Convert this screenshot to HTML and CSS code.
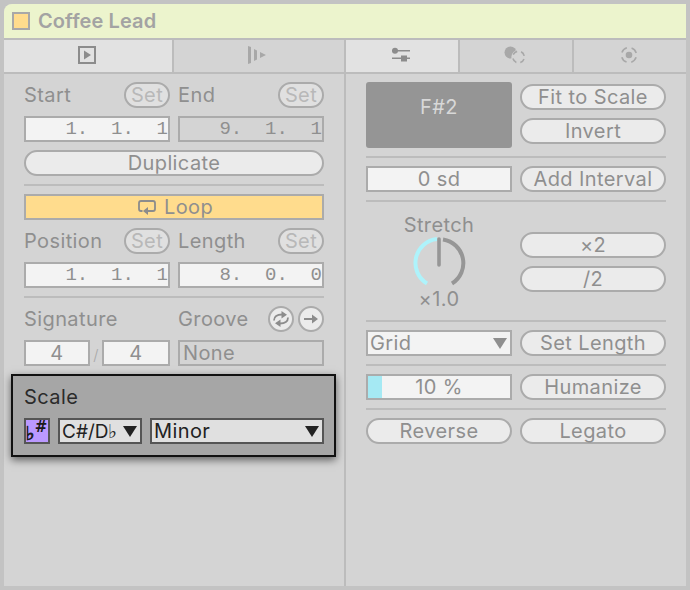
FILE: index.html
```html
<!DOCTYPE html>
<html lang="en">
<head>
<meta charset="utf-8">
<title>Coffee Lead</title>
<link rel="stylesheet" href="styles.css">
</head>
<body>
<div class="panel">
  <header class="title"><span class="swatch"></span><span class="title-text">Coffee Lead</span></header>
  <div class="columns">
    <section class="column">
      <nav class="tabs tabs-left">
        <div class="tab active"><svg class="nudge-2" width="18" height="18" viewBox="0 0 18 18"><rect x="1" y="1" width="16" height="16" fill="none" stroke="#8c8c8c" stroke-width="2"/><path d="M6 4.500 13 9 6 13.500Z" fill="#8c8c8c"/></svg></div>
        <div class="tab"><svg class="nudge-4" width="18" height="18" viewBox="0 0 18 18"><path d="M0 0 3 1V17L0 18Z" fill="#a8a8a8"/><path d="M6 3 9 4.500V13.500L6 15Z" fill="#a8a8a8"/><path d="M12 6 18 9 12 12Z" fill="#a8a8a8"/></svg></div>
      </nav>
      <div class="body">
        <div class="pair">
          <div class="label-row"><span class="label">Start</span><span class="btn set">Set</span></div>
          <div class="label-row"><span class="label">End</span><span class="btn set">Set</span></div>
        </div>
        <div class="pair">
          <div class="field num">1. 1. 1</div>
          <div class="field num off">9. 1. 1</div>
        </div>
        <div class="btn">Duplicate</div>
        <hr class="rule">
        <div class="loop"><svg width="18" height="16" viewBox="0 0 18 16"><path d="M4.500 12H3Q1 12 1 10V4Q1 2 3 2H15Q17 2 17 4V10Q17 12 15 12H9" fill="none" stroke="#8c8c8c" stroke-width="1.800"/><path d="M10 8V16L5 12Z" fill="#8c8c8c"/></svg><span>Loop</span></div>
        <div class="pair">
          <div class="label-row"><span class="label">Position</span><span class="btn set">Set</span></div>
          <div class="label-row"><span class="label">Length</span><span class="btn set">Set</span></div>
        </div>
        <div class="pair">
          <div class="field num">1. 1. 1</div>
          <div class="field num">8. 0. 0</div>
        </div>
        <hr class="rule">
        <div class="pair">
          <div class="label-row"><span class="label">Signature</span></div>
          <div class="label-row"><span class="label">Groove</span>
            <span class="circles">
              <span class="circle"><svg width="22" height="22" viewBox="0 0 22 22"><path d="M4 12.500C4 8.500 7 6.500 12 6.500" fill="none" stroke="#8c8c8c" stroke-width="1.800"/><path d="M11.500 3 17 6.800 11.500 10.500Z" fill="#8c8c8c"/><g transform="rotate(180 11 11)"><path d="M4 12.500C4 8.500 7 6.500 12 6.500" fill="none" stroke="#8c8c8c" stroke-width="1.800"/><path d="M11.500 3 17 6.800 11.500 10.500Z" fill="#8c8c8c"/></g></svg></span>
              <span class="circle"><svg width="22" height="22" viewBox="0 0 22 22"><path d="M4 10H12V6.500L18 11 12 15.500V12H4Z" fill="#8c8c8c"/></svg></span>
            </span>
          </div>
        </div>
        <div class="pair">
          <div class="signature"><div class="field">4</div><span class="slash">/</span><div class="field">4</div></div>
          <div class="field off left">None</div>
        </div>
        <div class="scale">
          <div class="scale-label">Scale</div>
          <div class="scale-row">
            <span class="flat"><span class="flat-b">♭</span><span class="flat-s">#</span></span>
            <div class="dark-select root"><span>C#/D♭</span><i class="arrow"></i></div>
            <div class="dark-select mode"><span>Minor</span><i class="arrow"></i></div>
          </div>
        </div>
      </div>
    </section>
    <section class="column">
      <nav class="tabs tabs-right">
        <div class="tab active"><svg class="nudge-2" width="18" height="16" viewBox="0 0 18 16"><path d="M0 3H18V4.600H0ZM0 10.500H18V12.100H0Z" fill="#8c8c8c"/><circle cx="3" cy="3.800" r="3" fill="#8c8c8c"/><rect x="9" y="8.500" width="6" height="6" fill="#8c8c8c"/></svg></div>
        <div class="tab"><svg class="nudge-3" width="22" height="18" viewBox="0 0 22 18"><circle cx="6.500" cy="6.500" r="6" fill="#a8a8a8"/><circle cx="14.500" cy="11" r="7.200" fill="#d4d4d4"/><circle cx="14.500" cy="11" r="5.800" fill="none" stroke="#a8a8a8" stroke-width="1.600" stroke-dasharray="5 4.100" stroke-dashoffset="-2"/></svg></div>
        <div class="tab"><svg class="nudge-2" width="18" height="18" viewBox="0 0 18 18"><circle cx="9" cy="9" r="3.300" fill="#a8a8a8"/><circle cx="9" cy="9" r="7.500" fill="none" stroke="#a8a8a8" stroke-width="1.600" stroke-dasharray="7 4.780" stroke-dashoffset="-2.400"/></svg></div>
      </nav>
      <div class="body">
        <div class="pair">
          <div class="note">F#2</div>
          <div class="side-buttons"><div class="btn">Fit to Scale</div><div class="btn">Invert</div></div>
        </div>
        <hr class="rule">
        <div class="pair">
          <div class="field">0 sd</div>
          <div class="btn">Add Interval</div>
        </div>
        <hr class="rule">
        <div class="pair stretch">
          <div class="knob">
            <div class="knob-label">Stretch</div>
            <svg class="knob-dial" width="56" height="52" viewBox="0 0 56 52"><path d="M16 47.500A24 24 0 0 1 26 3.100" fill="none" stroke="#aef3fb" stroke-width="4"/><path d="M32 3.400A24 24 0 0 1 41 47.500" fill="none" stroke="#969696" stroke-width="4"/><path d="M28 3V29" stroke="#969696" stroke-width="3.600" stroke-linecap="round"/></svg>
            <div class="knob-value">×1.0</div>
          </div>
          <div class="side-buttons stretch-buttons"><div class="btn">×2</div><div class="btn">/2</div></div>
        </div>
        <hr class="rule">
        <div class="pair">
          <div class="field select"><span>Grid</span><i class="arrow light"></i></div>
          <div class="btn">Set Length</div>
        </div>
        <hr class="rule">
        <div class="pair">
          <div class="field meter"><span class="meter-fill"></span><span>10 %</span></div>
          <div class="btn">Humanize</div>
        </div>
        <hr class="rule">
        <div class="pair">
          <div class="btn">Reverse</div>
          <div class="btn">Legato</div>
        </div>
      </div>
    </section>
  </div>
</div>
</body>
</html>
```

FILE: styles.css
```css
* { box-sizing: border-box; }
html, body { margin: 0; height: 100%; }
body {
  background: #c3c3c3;
  padding: 4px;
  width: 690px;
  height: 590px;
  overflow: hidden;
  font-family: Inter, "Liberation Sans", sans-serif;
  font-size: 20px;
  letter-spacing: 0.4px;
  color: #8f8f8f;
}
.panel {
  height: 582px;
  display: flex;
  flex-direction: column;
  background: #d4d4d4;
  border-radius: 8px 0 0 0;
}
.title {
  height: 34px;
  flex: none;
  display: flex;
  align-items: center;
  gap: 8px;
  padding-left: 8px;
  background: #ecf4cd;
  border-radius: 8px 0 0 0;
}
.swatch {
  width: 18px;
  height: 18px;
  background: #ffdc8d;
  border: 2px solid #a8a8a8;
}
.title-text { font-weight: 600; color: #a3a3a3; letter-spacing: 0.1px; }
.columns { flex: 1; display: grid; grid-template-columns: 340px 342px; }
.column { display: flex; flex-direction: column; }
.column + .column { border-left: 2px solid #bcbcbc; }
.tabs {
  flex: none;
  display: grid;
  height: 36px;
  border-top: 2px solid #bcbcbc;
  border-bottom: 2px solid #bcbcbc;
}
.tabs-left { grid-template-columns: 168px 172px; }
.tabs-right { grid-template-columns: 112px 114px 114px; }
.tab { display: flex; align-items: center; justify-content: center; }
.tab + .tab { border-left: 2px solid #bcbcbc; }
.tab.active { background: #e2e2e2; }
.tab svg { margin-bottom: 2px; }
.tab .nudge-2 { margin-right: 2px; }
.tab .nudge-3 { margin-right: 3px; }
.tab .nudge-4 { margin-right: 4px; }
.body { display: flex; flex-direction: column; gap: 8px; padding: 8px 20px 0; }
.pair { display: grid; grid-template-columns: 146px 146px; gap: 8px; }
.label-row { display: flex; justify-content: space-between; align-items: center; height: 26px; }
.label { line-height: 26px; margin-top: -1px; }
.btn {
  height: 26px;
  display: flex;
  align-items: center;
  justify-content: center;
  background: #ebebeb;
  border: 2px solid #ababab;
  border-radius: 13px;
  line-height: 1;
}
.btn.set { width: 46px; background: #e0e0e0; color: #b8b8b8; }
.field {
  height: 26px;
  display: flex;
  align-items: center;
  justify-content: center;
  background: #f3f3f3;
  border: 2px solid #ababab;
  position: relative;
}
.num {
  justify-content: flex-end;
  font-family: "Liberation Mono", monospace;
  font-size: 19px;
  letter-spacing: 0;
  word-spacing: 11.4px;
}
.off { background: #d4d4d4; }
.left { justify-content: flex-start; padding-left: 3px; }
.rule { margin: 0; height: 2px; border: 0; background: #bcbcbc; }
.loop {
  height: 26px;
  display: flex;
  align-items: center;
  justify-content: center;
  gap: 8px;
  padding-left: 3px;
  background: #ffdc8d;
  border: 2px solid #ababab;
}
.circles { display: flex; gap: 4px; }
.circle {
  width: 26px;
  height: 26px;
  display: flex;
  align-items: center;
  justify-content: center;
  background: #ebebeb;
  border: 2px solid #ababab;
  border-radius: 50%;
}
.signature { display: grid; grid-template-columns: 66px 12px 68px; }
.slash {
  display: flex;
  align-items: center;
  justify-content: center;
  padding-top: 3px;
  color: #a8a8a8;
  font-size: 15px;
  font-weight: 300;
}
.scale {
  margin: 0 -12px 0 -13px;
  height: 83px;
  padding: 8px 10px 0 11px;
  background: #a6a6a6;
  border: 2px solid #111;
  box-shadow: 0 3px 8px rgba(0, 0, 0, 0.55);
  color: #2b2b2b;
}
.scale-label { height: 26px; line-height: 26px; margin-bottom: 8px; }
.scale-row { display: grid; grid-template-columns: 26px 84px 174px; gap: 8px; }
.flat {
  height: 26px;
  display: flex;
  align-items: center;
  justify-content: center;
  background: #bb99ff;
  border: 2px solid #555;
  color: #1a1a1a;
  font-weight: 700;
  font-family: "DejaVu Sans", sans-serif;
  letter-spacing: 0;
}
.flat-b {
  font-size: 19px;
  line-height: 1;
  margin-top: 5px;
  margin-left: -1px;
  -webkit-text-stroke: 0.7px #1a1a1a;
}
.flat-s { font-size: 15px; line-height: 1; margin-top: -7px; }
.dark-select {
  height: 26px;
  display: flex;
  align-items: center;
  justify-content: space-between;
  padding: 0 3px 0 2px;
  background: #e0e0e0;
  border: 2px solid #555;
  color: #222;
}
.root { font-size: 19px; letter-spacing: 0; }
.arrow {
  width: 0;
  height: 0;
  border-left: 7px solid transparent;
  border-right: 7px solid transparent;
  border-top: 11px solid #222;
}
.arrow.light { border-top-color: #8f8f8f; }
.select { justify-content: space-between; padding: 0 3px 0 2px; }
.note {
  height: 66px;
  display: flex;
  align-items: flex-start;
  justify-content: center;
  padding-top: 13px;
  background: #959595;
  border-radius: 3px;
  color: #d8d8d8;
}
.side-buttons { display: flex; flex-direction: column; gap: 8px; padding-top: 2px; }
.stretch { height: 102px; }
.stretch-buttons { padding-top: 22px; }
.knob { display: flex; flex-direction: column; align-items: center; padding-top: 2px; }
.knob-label, .knob-value { height: 26px; line-height: 26px; }
.knob-dial { margin: -2px 0 -2px; }
.meter { position: relative; }
.meter-fill {
  position: absolute;
  left: 0;
  top: 0;
  bottom: 0;
  width: 14px;
  background: #a5e9f3;
}
.meter span:last-child { position: relative; }
```
